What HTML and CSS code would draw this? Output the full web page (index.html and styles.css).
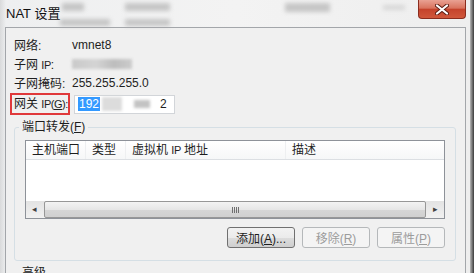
FILE: index.html
```html
<!DOCTYPE html>
<html lang="zh-CN">
<head>
  <meta charset="UTF-8" />
  <title>NAT 设置</title>
  <link rel="stylesheet" href="styles.css">
</head>
<body>
  <div class="screen">
    <div class="window">
      <div class="titlebar">
        <span class="ghost g1"></span>
        <span class="ghost g2"></span>
        <span class="ghost g3"></span>
        <span class="ghost g4"></span>
        <span class="ghost g5"></span>
        <span class="ghost g6"></span>
        <span class="title">NAT 设置</span>
        <button class="close" title="关闭">
          <svg width="14" height="11" viewBox="0 0 14 11">
            <path d="M2 1.5 L12 9.5 M12 1.5 L2 9.5" stroke="#5b1b12" stroke-width="4" stroke-linecap="round"/>
            <path d="M2 1.5 L12 9.5 M12 1.5 L2 9.5" stroke="#ffffff" stroke-width="2.2" stroke-linecap="round"/>
          </svg>
        </button>
      </div>

      <div class="panel">
        <div class="info">
          <div class="row"><span class="label">网络:</span><span class="value">vmnet8</span></div>
          <div class="row"><span class="label">子网 <span class="ip">IP</span>:</span><span class="value"><span class="smudge subnet"></span></span></div>
          <div class="row"><span class="label">子网掩码:</span><span class="value">255.255.255.0</span></div>
          <div class="row gateway">
            <label class="label marked">网关 <span class="ip">IP(<u>G</u>):</span></label>
            <div class="ipbox">
              <span class="sel">192</span>
              <span class="smudge s1"></span>
              <span class="smudge s2"></span>
              <span class="last">2</span>
            </div>
          </div>
        </div>

        <fieldset class="group">
          <legend>端口转发(<u>F</u>)</legend>
          <div class="list">
            <div class="list-head">
              <span class="col c1">主机端口</span>
              <span class="col c2">类型</span>
              <span class="col c3">虚拟机 <span class="ip">IP</span> 地址</span>
              <span class="col c4">描述</span>
            </div>
            <div class="list-body"></div>
            <div class="hscroll">
              <span class="arrow">&#9666;</span>
              <span class="thumb"><span class="grip"></span></span>
              <span class="arrow">&#9656;</span>
            </div>
          </div>
          <div class="actions">
            <button class="btn">添加(<u>A</u>)...</button>
            <button class="btn" disabled>移除(<u>R</u>)</button>
            <button class="btn" disabled>属性(<u>P</u>)</button>
          </div>
        </fieldset>

        <fieldset class="group">
          <legend>高级</legend>
        </fieldset>
      </div>
    </div>
    <div class="edge"></div>
  </div>
</body>
</html>
```

FILE: styles.css
```css
body {
  margin: 0;
  font-family: 'Liberation Sans', 'Noto Sans CJK SC', sans-serif;
  font-size: 12px;
  color: #1e1e1e;
}

.screen {
  display: flex;
  width: 474px;
  height: 273px;
  overflow: hidden;
}

.window {
  flex: 1;
  display: flex;
  flex-direction: column;
  padding: 0 4px 0 5px;
  background: linear-gradient(to right, #d9dadb, #eeeff0 6px, #f3f3f3 50%, #eeeeee);
}

.edge {
  width: 4px;
  background: linear-gradient(to right, #b9b9b9, #3a3a3a);
}

/* title bar */
.titlebar {
  position: relative;
  height: 27px;
  display: flex;
  align-items: flex-start;
}

.title {
  position: relative;
  margin-left: 1px;
  line-height: 27px;
  font-size: 13px;
  color: #111;
}

.ghost {
  position: absolute;
  background: #a9a9a9;
  filter: blur(2px);
  opacity: 0.6;
}
.g1 { left: 57px; top: 3px; width: 22px; height: 8px; }
.g2 { left: 120px; top: 3px; width: 45px; height: 8px; }
.g3 { left: 55px; top: 19px; width: 50px; height: 7px; }
.g4 { left: 120px; top: 19px; width: 45px; height: 7px; }
.g5 { left: 280px; top: 3px; width: 45px; height: 9px; }
.g6 { left: 378px; top: 5px; width: 22px; height: 5px; opacity: 0.35; }

.close {
  margin-left: auto;
  width: 48px;
  height: 19px;
  padding: 0;
  border: 1px solid #8a2c1e;
  border-top: none;
  border-radius: 0 0 4px 4px;
  background: linear-gradient(#e9a193, #d9735e 45%, #c5432c 52%, #d0573b);
  display: flex;
  align-items: center;
  justify-content: center;
}

/* dialog body */
.panel {
  flex: 1;
  border: 1px solid #a3a6aa;
  border-bottom: none;
  background: #f0f0f0;
  padding: 7px 9px 0 8px;
}

.row {
  display: flex;
  align-items: center;
  height: 19px;
}

.label {
  width: 58px;
  flex-shrink: 0;
  white-space: nowrap;
}

.ip {
  font-size: 11px;
  letter-spacing: -0.5px;
}

.smudge {
  display: inline-block;
  filter: blur(1.5px);
}

.smudge.subnet {
  width: 60px;
  height: 10px;
  vertical-align: middle;
  background: linear-gradient(to right, #c9c9c9, #d4d4d4 40%, #bdbdbd 70%, #cbcbcb);
}

.gateway {
  height: 22px;
  margin-top: 1px;
}

.marked {
  box-sizing: border-box;
  width: 60px;
  height: 22px;
  margin-left: -4px;
  padding-left: 2px;
  border: 2px solid #e0393b;
  line-height: 18px;
}

.ipbox {
  box-sizing: border-box;
  width: 101px;
  height: 19px;
  margin-left: 4px;
  padding-left: 3px;
  border: 1px solid #d2d5d9;
  background: #fff;
  display: flex;
  align-items: center;
}

.sel {
  background: #3399ff;
  color: #fff;
  line-height: 14px;
  padding: 0 1px;
}

.smudge.s1 {
  width: 20px;
  height: 14px;
  margin-left: 2px;
  background: #dcdcdc;
}

.smudge.s2 {
  width: 16px;
  height: 8px;
  margin-left: 12px;
  background: #c3c3c3;
}

.last {
  margin-left: 10px;
}

/* port forwarding group */
.group {
  margin: 4px 0 0;
  padding: 5px 10px 12px;
  border: 1px solid #d5dfe5;
  border-radius: 3px;
  min-width: 0;
}

.group legend {
  margin-left: -6px;
  padding: 0 3px;
  line-height: 16px;
}

.list {
  height: 79px;
  box-sizing: border-box;
  border: 1px solid #8e9299;
  background: #fff;
  display: flex;
  flex-direction: column;
}

.list-head {
  display: flex;
  height: 18px;
  border-bottom: 1px solid #dcdfe3;
  background: linear-gradient(#ffffff, #f6f7f8);
}

.col {
  line-height: 18px;
  padding-left: 6px;
  border-right: 1px solid #eeeff1;
  box-sizing: border-box;
  white-space: nowrap;
}
.c1 { width: 60px; }
.c2 { width: 40px; }
.c3 { width: 160px; }
.c4 { flex: 1; border-right: none; }

.list-body {
  flex: 1;
}

.hscroll {
  display: flex;
  height: 17px;
  background: linear-gradient(#e3e3e3, #f1f1f1);
}

.arrow {
  width: 17px;
  text-align: center;
  font-size: 9px;
  line-height: 17px;
  color: #404040;
}

.thumb {
  flex: 1;
  margin: 0 1px;
  border: 1px solid #979797;
  border-radius: 2px;
  background: linear-gradient(#f3f3f3, #e6e6e6 50%, #d6d6d6 51%, #d0d0d0);
  display: flex;
  align-items: center;
  justify-content: center;
}

.grip {
  width: 7px;
  height: 6px;
  background: repeating-linear-gradient(to right, #6f6f6f 0 1px, transparent 1px 2px);
}

.actions {
  display: flex;
  justify-content: flex-end;
  gap: 7px;
  margin-top: 8px;
}

.btn {
  width: 68px;
  height: 21px;
  padding: 0;
  font: inherit;
  color: #1e1e1e;
  border: 1px solid #707070;
  border-radius: 3px;
  background: linear-gradient(#f2f2f2, #ebebeb 50%, #dddddd 51%, #cfcfcf);
}

.btn:disabled {
  color: #9c9c9c;
  border-color: #b5b8ba;
  background: #f4f4f4;
}
```
